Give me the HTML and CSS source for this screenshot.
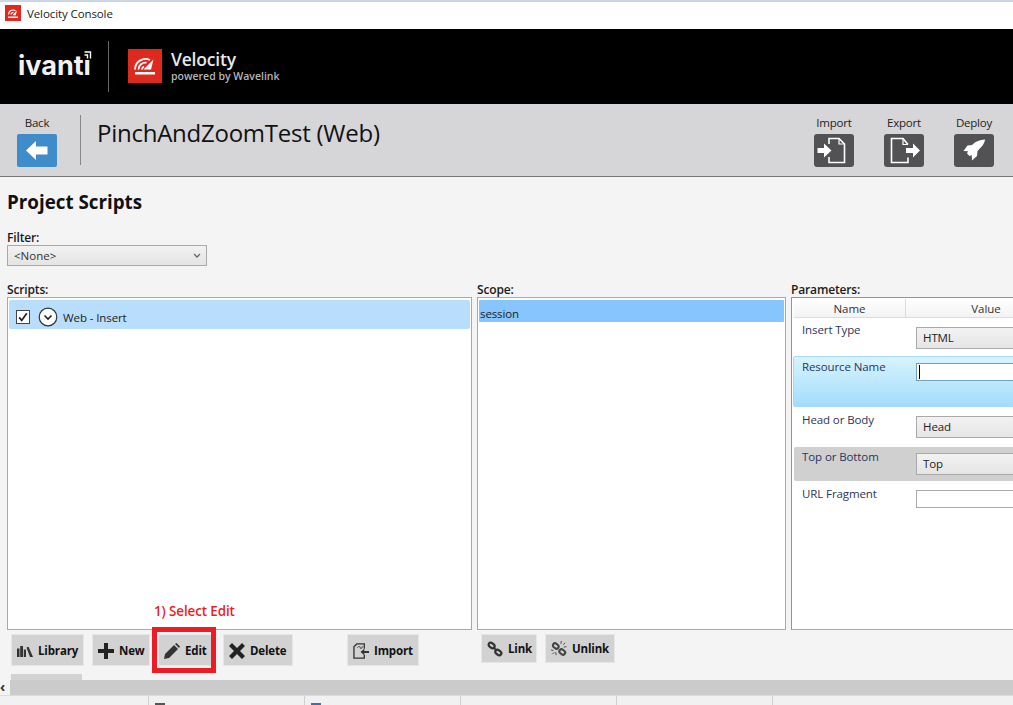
FILE: index.html
```html
<!DOCTYPE html>
<html lang="en">
<head>
<meta charset="utf-8">
<title>Velocity Console</title>
<link rel="stylesheet" href="styles.css">
</head>
<body>
<div class="app">
  <div class="titlebar">
    <svg class="title-icon" viewBox="0 0 16 16"><rect width="16" height="16" fill="#e02a20"/><path d="M3.500 9.500a4.500 4.500 0 0 1 7-3.700M6 9.500a2.200 2.200 0 0 1 2.500-2" fill="none" stroke="#fff" stroke-width="1.200"/><path d="M7.500 10l4.500-4.500-1.500 5z" fill="#fff"/><path d="M3 11.500h10V13H3z" fill="#fff"/></svg>
    <span>Velocity Console</span>
  </div>
  <header class="brand">
    <div class="ivanti">ivanti<svg class="ivanti-mark" viewBox="0 0 9 8"><rect width="9" height="8" fill="#000"/><path d="M1.500 1h6v6.500M1.500 4H4.500v3.500" fill="none" stroke="#fff" stroke-width="1.400"/></svg></div>
    <div class="brand-rule"></div>
    <svg class="velocity-logo" viewBox="0 0 34 34"><rect width="34" height="34" fill="#dd2a1f"/><path d="M7 20.500a10.500 10.500 0 0 1 15-9.500M10.500 20.500a7 7 0 0 1 8-6.800M14 20.500a3.500 3.500 0 0 1 2-3" fill="none" stroke="#fff" stroke-width="1.800"/><path d="M15.500 20.500l10-10-2.500 10z" fill="#fff"/><path d="M7 23h20v2.500H7z" fill="#fff"/></svg>
    <div class="brand-text"><div class="brand-name">Velocity</div><div class="brand-sub">powered by Wavelink</div></div>
  </header>
  <section class="project">
    <div class="tool tool-back">
      <span class="tool-label">Back</span>
      <svg class="tool-icon" viewBox="0 0 40 33"><rect width="40" height="33" rx="2" fill="#3f8ccb"/><path d="M9 16.500 19 7v5.500h11.500v8H19V26z" fill="#fff"/></svg>
    </div>
    <div class="project-rule"></div>
    <h1 class="project-title">PinchAndZoomTest (Web)</h1>
    <div class="project-tools">
      <div class="tool">
        <span class="tool-label">Import</span>
        <svg class="tool-icon" viewBox="0 0 40 33"><rect width="40" height="33" rx="3" fill="#525255"/><path d="M15 10V4.500h10l5.500 5.500v18.500H15V23" fill="none" stroke="#fff" stroke-width="1.600"/><path d="M25 4.500V10h5.500" fill="none" stroke="#fff" stroke-width="1.200"/><path d="M3.500 14h6.500v-4.500l7.500 7-7.500 7V19H3.500z" fill="#fff"/></svg>
      </div>
      <div class="tool">
        <span class="tool-label">Export</span>
        <svg class="tool-icon" viewBox="0 0 40 33"><rect width="40" height="33" rx="3" fill="#525255"/><path d="M24 10.500 19 4.500H7.500v24H24v-5" fill="none" stroke="#fff" stroke-width="1.600"/><path d="M19 4.500v6h5" fill="none" stroke="#fff" stroke-width="1.200"/><path d="M22 14h7V9.500l7 7-7 7V19h-7z" fill="#fff"/></svg>
      </div>
      <div class="tool">
        <span class="tool-label">Deploy</span>
        <svg class="tool-icon" viewBox="0 0 40 33"><rect width="40" height="33" rx="3" fill="#525255"/><path d="M31 5.500c-5 .3-9.500 1.800-13 5.500l-4.500.5L9.500 17l4.500.3-1 2.200 2.500 2.500 2.200-1 .3 5.500 5-4.500.5-5C27 13.500 30.500 10 31 5.500z" fill="#fff"/></svg>
      </div>
    </div>
  </section>
  <main class="content">
    <h2 class="page-title">Project Scripts</h2>
    <label class="field-label">Filter:</label>
    <div class="select-box"><span>&lt;None&gt;</span><svg class="chev" viewBox="0 0 8 6"><path d="M1 1l3 3 3-3" fill="none" stroke="#666" stroke-width="1.300"/></svg></div>
    <div class="columns">
      <div class="col col-scripts">
        <div class="field-label">Scripts:</div>
        <div class="listbox">
          <div class="script-row">
            <span class="check"><svg viewBox="0 0 14 14"><path d="M2.500 7.500 5.500 11 11.500 2.500" fill="none" stroke="#222" stroke-width="2"/></svg></span>
            <svg class="expander" viewBox="0 0 20 20"><circle cx="10" cy="10" r="8.800" fill="#fff" stroke="#333" stroke-width="1.200"/><path d="M6.500 8.500 10 12l3.500-3.500" fill="none" stroke="#222" stroke-width="1.600"/></svg>
            <span>Web - Insert</span>
          </div>
        </div>
      </div>
      <div class="col col-scope">
        <div class="field-label">Scope:</div>
        <div class="listbox"><div class="scope-row">session</div></div>
      </div>
      <div class="col col-params">
        <div class="field-label">Parameters:</div>
        <div class="params">
          <div class="params-head"><span class="head-name">Name</span><span class="head-value">Value</span></div>
          <div class="param-row row-insert"><span class="param-name">Insert Type</span><div class="combo">HTML</div></div>
          <div class="param-row row-resource"><span class="param-name">Resource Name</span><div class="textbox focused"><i class="caret"></i></div></div>
          <div class="param-row row-head"><span class="param-name">Head or Body</span><div class="combo">Head</div></div>
          <div class="param-row row-top"><span class="param-name">Top or Bottom</span><div class="combo">Top</div></div>
          <div class="param-row row-url"><span class="param-name">URL Fragment</span><div class="textbox"></div></div>
        </div>
      </div>
    </div>
    <div class="toolbar">
      <div class="toolbar-left">
        <button class="btn btn-library"><svg viewBox="0 0 16 16"><path d="M0 14V5.500h2.500V14zM3.200 14V3h2.800v11zM6.800 14V6.500h2.200V14zM9.500 4.500l2-.8L16 14h-3z" fill="#333"/></svg>Library</button>
        <button class="btn btn-new"><svg viewBox="0 0 16 16"><path d="M6 0h4v6h6v4h-6v6H6v-6H0V6h6z" fill="#222"/></svg>New</button>
        <div class="edit-wrap">
          <span class="note">1) Select Edit</span>
          <button class="btn btn-edit"><svg viewBox="0 0 16 16"><path d="M0 16l1-5L10 2l4 4-9 9zM11 1l1.500-1 3.500 3.500-1 1.500z" fill="#333"/></svg>Edit</button>
        </div>
        <button class="btn btn-delete"><svg viewBox="0 0 16 16"><path d="M3 0l5 5 5-5 3 3-5 5 5 5-3 3-5-5-5 5-3-3 5-5-5-5z" fill="#222"/></svg>Delete</button>
        <button class="btn btn-import"><svg viewBox="0 0 17 17"><path d="M12 12.500v3.500H1V4l3-3h8v5" fill="none" stroke="#333" stroke-width="1.400"/><path d="M4.500 5l1.500-1.500M7 3.500 8 6M10 3.500 9 6" stroke="#333" fill="none"/><path d="M17 8.500h-5V6L8 9.500l4 3.500v-2.500h5z" fill="#333"/></svg>Import</button>
      </div>
      <div class="toolbar-right">
        <button class="btn btn-link"><svg viewBox="0 0 17 17"><rect x="1.500" y="2.500" width="7" height="4.500" rx="2.200" transform="rotate(40 5 4.700)" fill="none" stroke="#333" stroke-width="2.400"/><rect x="8.500" y="10" width="7" height="4.500" rx="2.200" transform="rotate(40 12 12.200)" fill="none" stroke="#333" stroke-width="2.400"/><path d="M6.500 6.500l4 4" stroke="#333" stroke-width="2"/></svg>Link</button>
        <button class="btn btn-unlink"><svg viewBox="0 0 17 17"><rect x="2" y="3" width="6.500" height="4.500" rx="2.200" transform="rotate(40 5 5)" fill="none" stroke="#444" stroke-width="2.200"/><rect x="8.500" y="9.500" width="6.500" height="4.500" rx="2.200" transform="rotate(40 12 12)" fill="none" stroke="#444" stroke-width="2.200"/><path d="M0 9.500l2.500.5M5 12l.5 3M1.500 14l2-2M11 0l-.5 3M16.500 6l-3 .5M15 2l-2 2" stroke="#444" fill="none"/></svg>Unlink</button>
      </div>
    </div>
    <div class="stub"></div>
  </main>
  <div class="scrollbar"><span class="scroll-arrow">‹</span><div class="scroll-track"></div></div>
  <div class="statusbar">
    <div class="status-cell cell-a"></div>
    <div class="status-cell cell-b"><i class="status-mark"></i></div>
    <div class="status-cell cell-c"><i class="status-mark status-mark-blue"></i></div>
    <div class="status-cell cell-d"></div>
    <div class="status-cell cell-e"></div>
  </div>
</div>
</body>
</html>
```
FILE: styles.css
```css
* { box-sizing: border-box; }
*::before, *::after { box-sizing: border-box; }
html, body { margin: 0; height: 100%; overflow: hidden; }
body { font-family: "Open Sans", "Noto Sans", "Liberation Sans", sans-serif; font-size: 12px; color: #111; background: #f4f4f4; }
.app { width: 1013px; height: 705px; display: flex; flex-direction: column; overflow: hidden; }

.titlebar { height: 29px; flex: none; background: #fff; border-top: 2px solid #cdd6e6; display: flex; align-items: center; gap: 6px; padding: 0 0 5px 5px; font-size: 11.500px; letter-spacing: -.1px; color: #222; }
.title-icon { width: 16px; height: 16px; }

.brand { height: 75px; flex: none; background: #000; color: #fff; display: flex; align-items: flex-start; position: relative; }
.ivanti { font-family: "Inter", "Liberation Sans", sans-serif; font-weight: 700; font-size: 27px; line-height: 30px; letter-spacing: 0; margin: 22px 0 0 18px; width: 73px; position: relative; color: #f2f2f2; }
.ivanti-mark { position: absolute; right: -1px; top: 0; width: 9px; height: 8px; }
.brand-rule { width: 1px; height: 51px; background: #666; margin: 12px 0 0 17px; }
.velocity-logo { width: 34px; height: 34px; margin: 20px 0 0 19px; }
.brand-text { margin: 19px 0 0 9px; }
.brand-name { font-size: 17.500px; font-weight: 600; line-height: 22px; color: #e8e8e8; letter-spacing: -.2px; }
.brand-sub { font-size: 10.500px; font-weight: 600; line-height: 13px; color: #b5b5b5; letter-spacing: 0; }

.project { height: 73px; flex: none; background: #d6d6d8; border-bottom: 1px solid #77777a; display: flex; align-items: flex-start; padding-left: 17px; }
.tool { width: 40px; display: flex; flex-direction: column; align-items: center; margin-top: 11px; }
.tool-label { font-size: 11.500px; line-height: 16px; height: 19px; letter-spacing: -.2px; white-space: nowrap; color: #222; }
.tool-icon { width: 40px; height: 33px; display: block; }
.project-rule { width: 1px; height: 50px; background: #88888a; margin: 11px 0 0 23px; }
.project-title { margin: 12px 0 0 16px; font-size: 24px; font-weight: 400; line-height: 34px; letter-spacing: -.25px; color: #111; white-space: nowrap; }
.project-tools { margin-left: auto; display: flex; gap: 30px; padding-right: 19px; }

.content { flex: 1; min-height: 0; padding: 0 0 0 7px; display: flex; flex-direction: column; }
.page-title { margin: 12px 0 0; font-size: 18.800px; line-height: 26px; font-weight: 700; letter-spacing: 0; color: #111; }
.field-label { font-size: 12px; font-weight: 600; line-height: 16px; height: 14px; letter-spacing: -.15px; color: #1a1a1a; }
label.field-label { margin-top: 15px; display: block; }
.select-box { width: 200px; height: 21px; margin-top: 1px; border: 1px solid #a9a9a9; background: linear-gradient(#f2f2f2, #e4e4e4); display: flex; align-items: center; justify-content: space-between; padding: 0 5px 0 6px; color: #333; font-size: 11.500px; }
.chev { width: 8px; height: 6px; }

.columns { display: flex; gap: 5px; margin-top: 16px; height: 348px; }
.col { display: flex; flex-direction: column; flex: none; }
.col-scripts { width: 465px; }
.col-scope { width: 309px; }
.col-params { width: 240px; }
.col .field-label { height: 14px; margin-bottom: 1px; }
.listbox { flex: 1; background: #fff; border: 1px solid #a9a9a9; padding: 2px 1px; }
.script-row { height: 29px; background: #b9defd; border-radius: 2px; display: flex; align-items: center; padding: 5px 0 0 7px; font-size: 11.500px; color: #222; letter-spacing: -.1px; }
.check { width: 14px; height: 14px; border: 1px solid #444; background: #fff; margin-right: 8px; display: flex; }
.check svg { width: 12px; height: 12px; }
.expander { width: 20px; height: 20px; margin-right: 5px; }
.scope-row { height: 22px; background: #86c5fd; border-radius: 1px; line-height: 28px; padding-left: 1px; font-size: 11.500px; color: #222; letter-spacing: -.1px; }

.params { flex: 1; background: #fff; border: 1px solid #a9a9a9; border-top-color: #7a9cb8; border-left-color: #7a9cb8; padding: 1px 0 0 2px; overflow: hidden; }
.params-head { height: 19px; display: flex; background: linear-gradient(#fff, #f3f3f3); border-bottom: 1px solid #dcdcdc; font-size: 11.500px; line-height: 19px; color: #333; }
.head-name { width: 112px; flex: none; text-align: center; border-right: 1px solid #dcdcdc; }
.head-value { width: 160px; flex: none; text-align: center; }
.param-row { display: flex; align-items: flex-start; padding-left: 8px; font-size: 11.500px; line-height: 15px; color: #2a3560; border-radius: 2px; letter-spacing: -.1px; }
.param-name { width: 114px; flex: none; margin-top: 2px; }
.row-insert { height: 38px; }
.row-insert .param-name { margin-top: 4px; }
.row-resource { height: 51px; background: linear-gradient(#d8f3ff, #a3ddfb); border: 1px solid #a5dafa; padding-left: 8px; margin-left: -1px; }
.row-head { height: 39px; margin-top: 1px; }
.row-head .param-name { margin-top: 4px; }
.row-top { height: 34px; background: #d0d0d0; }
.row-url { height: 40px; margin-top: 3px; }
.combo { flex: 1; height: 22px; border: 1px solid #a9a9a9; background: linear-gradient(#f2f2f2, #e5e5e5); padding-left: 6px; line-height: 20px; color: #222; }
.row-insert .combo { margin-top: 9px; }
.row-head .combo { margin-top: 8px; }
.row-top .combo { margin-top: 6px; }
.textbox { flex: 1; height: 18px; border: 1px solid #a9a9a9; background: #fff; position: relative; }
.row-resource .textbox { margin-top: 6px; }
.row-url .textbox { margin-top: 6px; }
.textbox.focused { border-color: #6e9fc4; }
.caret { display: block; width: 1px; height: 14px; background: #000; margin: 1px 0 0 2px; }

.toolbar { display: flex; margin-top: 4px; padding-left: 4px; height: 40px; align-items: flex-start; }
.toolbar-left { display: flex; width: 470px; gap: 8px; align-items: flex-start; }
.toolbar-right { display: flex; gap: 8px; }
.btn { height: 32px; border: 1px solid #e6e6e6; background: #d2d2d2; font: 700 11.500px/1 "Open Sans", "Noto Sans", sans-serif; letter-spacing: -.15px; color: #111; display: flex; align-items: center; padding: 1px 4px 0 5px; gap: 5px; }
.btn svg { width: 16px; height: 16px; flex: none; }
.btn-library { width: 73px; }
.btn-new { width: 58px; }
.btn-edit { width: 54px; }
.btn-delete { width: 70px; margin-left: 3px; }
.btn-import { width: 72px; margin-left: 46px; }
.btn-link { width: 56px; height: 29px; padding-top: 0; }
.btn-unlink { width: 70px; height: 29px; padding-top: 0; }

.edit-wrap { position: relative; width: 54px; height: 32px; }
.edit-wrap::after { content: ""; position: absolute; left: -6px; top: -7px; width: 64px; height: 46px; border: 5px solid #ed1c24; pointer-events: none; }
.note { position: absolute; left: -4px; top: -32px; white-space: nowrap; color: #ed1c24; font-size: 13.400px; font-weight: 600; letter-spacing: -.1px; }
.stub { width: 71px; height: 6px; background: #d2d2d2; margin-left: 4px; }

.scrollbar { height: 15px; flex: none; display: flex; background: #f4f4f4; border-top: 0; }
.scroll-arrow { width: 10px; font-size: 14px; line-height: 13px; color: #333; font-weight: 700; }
.scroll-track { flex: 1; background: #cbcbcb; }
.statusbar { height: 10px; flex: none; background: #f1f1f1; border-top: 1px solid #dcdcdc; display: flex; overflow: hidden; }
.status-cell { border-right: 1px solid #d0d0d0; flex: none; position: relative; }
.cell-a { width: 149px; }
.cell-b { width: 156px; }
.cell-c { width: 156px; }
.cell-d { width: 156px; }
.cell-e { width: 156px; }
.status-mark { position: absolute; left: 6px; top: 7px; width: 10px; height: 2px; background: #555; }
.status-mark-blue { background: #3f6fb0; }
```
